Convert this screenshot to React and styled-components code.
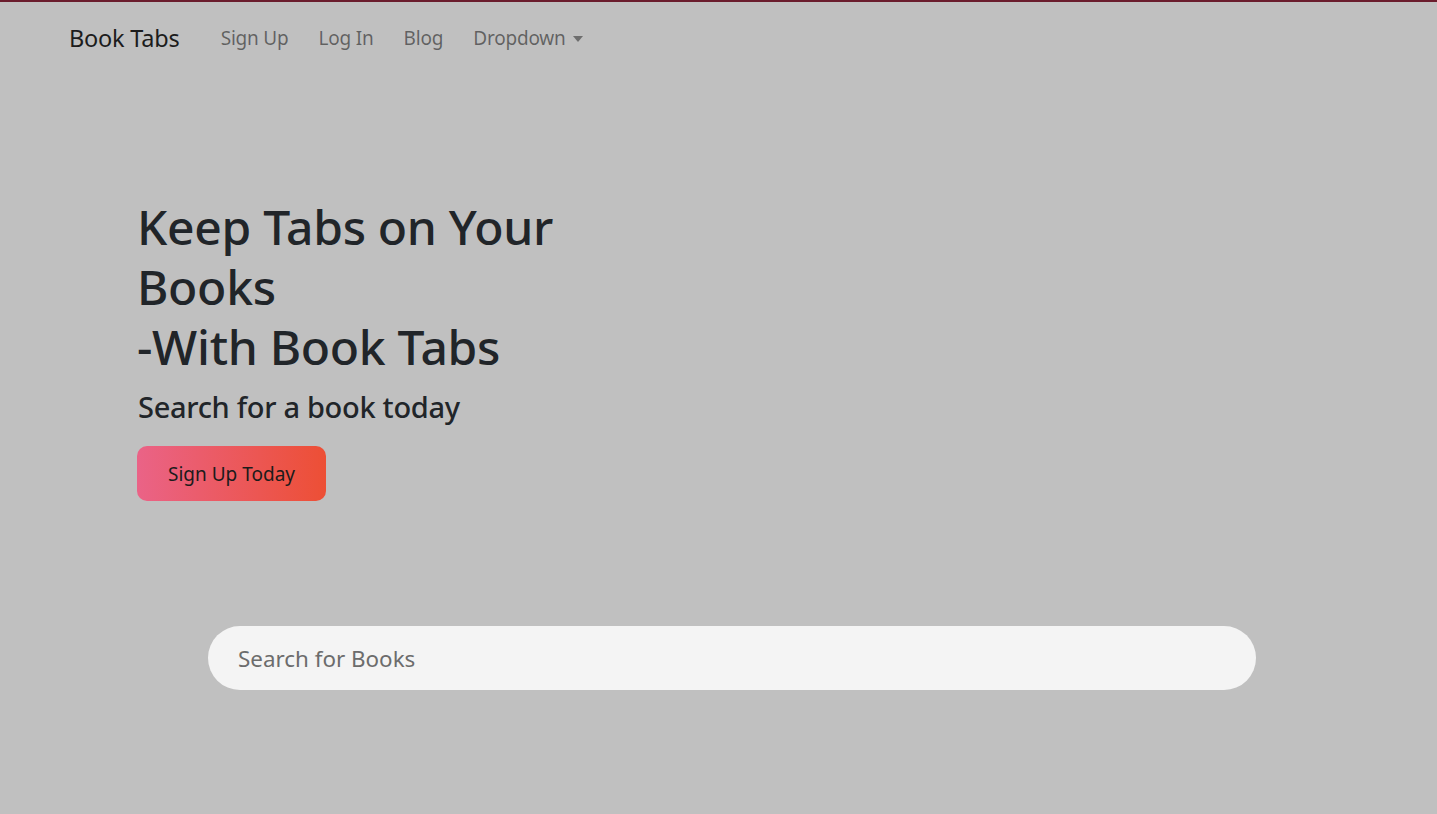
import React from 'react';
import styled, { createGlobalStyle } from 'styled-components';

const GlobalStyle = createGlobalStyle`
  html, body {
    margin: 0;
    padding: 0;
    background: #c0c0c0;
  }

  body {
    font-family: 'Noto Sans', 'Open Sans', sans-serif;
    color: #212529;
    border-top: 2px solid #6b1d2d;
    min-height: 812px;
  }

  * {
    box-sizing: border-box;
  }
`;

export default function App() {
  return (
    <>
      <GlobalStyle />
      <Navbar>
        <Brand href="#">Book Tabs</Brand>
        <NavList>
          <li>
            <NavLink href="#">Sign Up</NavLink>
          </li>
          <li>
            <NavLink href="#">Log In</NavLink>
          </li>
          <li>
            <NavLink href="#">Blog</NavLink>
          </li>
          <li>
            <NavLink href="#" $dropdown>
              Dropdown
            </NavLink>
          </li>
        </NavList>
      </Navbar>

      <Hero>
        <Title>
          Keep Tabs on Your Books
          <br />
          -With Book Tabs
        </Title>
        <Subtitle>Search for a book today</Subtitle>
        <CtaButton type="button">Sign Up Today</CtaButton>
      </Hero>

      <SearchSection>
        <SearchInput type="text" placeholder="Search for Books" />
      </SearchSection>
    </>
  );
}

const Navbar = styled.nav`
  display: flex;
  align-items: center;
  height: 72px;
  padding: 0 0 0 69px;
`;

const Brand = styled.a`
  font-size: 23.5px;
  color: #1c1c1c;
  text-decoration: none;
  margin-right: 26px;
  letter-spacing: -0.2px;
`;

const NavList = styled.ul`
  display: flex;
  list-style: none;
  margin: 0;
  padding: 0;
`;

const NavLink = styled.a`
  display: flex;
  align-items: center;
  padding: 8px 15px;
  font-size: 19px;
  color: rgba(0, 0, 0, 0.5);
  text-decoration: none;
  letter-spacing: -0.2px;

  &:after {
    content: ${(p) => (p.$dropdown ? "''" : 'none')};
    display: inline-block;
    margin-left: 7px;
    margin-top: 1px;
    border-top: 6px solid #6e6e6e;
    border-left: 5.5px solid transparent;
    border-right: 5.5px solid transparent;
  }
`;

const Hero = styled.section`
  padding: 123px 0 0 137px;
  width: 640px;
`;

const Title = styled.h1`
  margin: 0;
  font-size: 48px;
  line-height: 60px;
  font-weight: 500;
  color: #212529;
  max-width: 460px;
  letter-spacing: -0.3px;
`;

const Subtitle = styled.h3`
  margin: 13px 0 0 1px;
  font-size: 29px;
  line-height: 34px;
  font-weight: 500;
  color: #212529;
  letter-spacing: -0.3px;
`;

const CtaButton = styled.button`
  margin-top: 22px;
  display: inline-flex;
  align-items: center;
  justify-content: center;
  width: 189px;
  height: 55px;
  border: 0;
  border-radius: 10px;
  background: linear-gradient(90deg, #ea6387 0%, #ed4f35 100%);
  font-family: 'Noto Sans', 'Open Sans', sans-serif;
  font-size: 19px;
  color: #1b1b1b;
  cursor: pointer;
`;

const SearchSection = styled.section`
  padding: 125px 181px 0 208px;
`;

const SearchInput = styled.input`
  display: block;
  width: 100%;
  height: 64px;
  border: 0;
  border-radius: 32px;
  background: #f4f4f4;
  padding: 0 30px;
  font-family: 'Noto Sans', 'Open Sans', sans-serif;
  font-size: 22.4px;
  color: #333;
  outline: none;

  &::placeholder {
    color: #6c6c6c;
  }
`;
